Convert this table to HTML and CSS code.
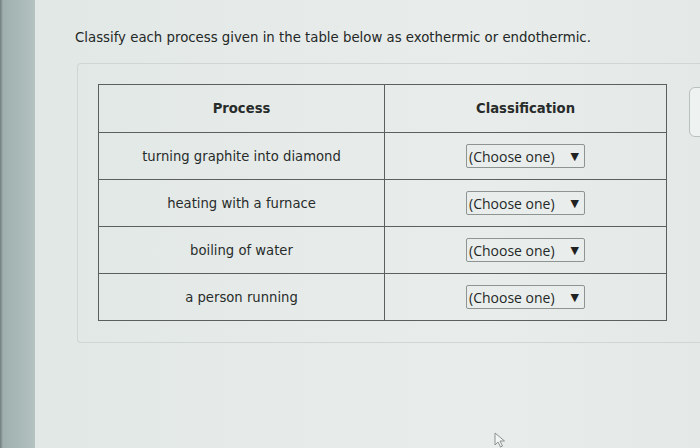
FILE: index.html
```html
<!DOCTYPE html>
<html>
<head>
<meta charset="utf-8">
<link rel="stylesheet" href="styles.css">
</head>
<body>
<div class="screen">
  <div class="strip"></div>
  <div class="main">
    <p class="prompt">Classify each process given in the table below as exothermic or endothermic.</p>
    <div class="panel">
      <table class="grid">
        <tr class="head">
          <th class="c1">Process</th>
          <th class="c2">Classification</th>
        </tr>
        <tr>
          <td>turning graphite into diamond</td>
          <td><span class="sel">(Choose one)<span class="arr">▼</span></span></td>
        </tr>
        <tr>
          <td>heating with a furnace</td>
          <td><span class="sel">(Choose one)<span class="arr">▼</span></span></td>
        </tr>
        <tr>
          <td>boiling of water</td>
          <td><span class="sel">(Choose one)<span class="arr">▼</span></span></td>
        </tr>
        <tr>
          <td>a person running</td>
          <td><span class="sel">(Choose one)<span class="arr">▼</span></span></td>
        </tr>
      </table>
      <div class="sidebtn"></div>
    </div>
  </div>
  <svg class="cursor" width="14" height="16" viewBox="0 0 14 16"><path d="M1 1 L1 13 L4 10 L6.5 15 L8.5 14 L6 9 L10.5 9 Z" fill="#f4f6f5" stroke="#8a9290" stroke-width="1"/></svg>
</div>
</body>
</html>
```
FILE: styles.css
```css
html, body {
  margin: 0;
  padding: 0;
}
body {
  width: 700px;
  height: 448px;
  overflow: hidden;
  background: #e3e9e7;
  font-family: "DejaVu Sans", Verdana, sans-serif;
  color: #2b2f2e;
}
.screen {
  position: relative;
  display: flex;
  width: 700px;
  height: 448px;
  background: linear-gradient(90deg, #e0e7e5 0%, #e6ebe9 40%, #e8ecea 70%, #e4e9e7 100%);
}
.strip {
  width: 35px;
  flex: none;
  background: linear-gradient(90deg, #6f7c7b 0px, #9fb0ae 3px, #a9b9b7 20px, #b4c2c0 35px);
}
.main {
  flex: 1;
  padding-left: 40px;
}
.prompt {
  margin: 28px 0 0 0;
  font-size: 13.3px;
  line-height: 20px;
  color: #242827;
}
.panel {
  position: relative;
  margin-top: 15px;
  margin-left: 2px;
  border: 1px solid #cfd6d4;
  border-right: none;
  border-radius: 4px 0 0 4px;
  height: 280px;
  padding: 20px 0 0 20px;
  box-sizing: border-box;
}
.grid {
  border-collapse: collapse;
  width: 569px;
  font-size: 13.2px;
  color: #282c2b;
}
.grid th, .grid td {
  border: 1px solid #5b605f;
  text-align: center;
  padding: 0;
  height: 46px;
}
.grid th {
  font-weight: bold;
  height: 47px;
  font-size: 13.2px;
}
.grid .c1 {
  width: 285px;
}
.sel {
  display: inline-flex;
  align-items: center;
  justify-content: space-between;
  width: 119px;
  height: 24px;
  box-sizing: border-box;
  border: 1px solid #8d9492;
  border-radius: 2px;
  padding: 0 5px 0 2px;
  font-family: "Open Sans", "Noto Sans", sans-serif;
  font-size: 14px;
  color: #242827;
  background: #e9eeec;
}
.arr {
  font-family: "DejaVu Sans", sans-serif;
  font-size: 11px;
  color: #1f2221;
}
.sidebtn {
  position: absolute;
  left: 611px;
  top: 23px;
  width: 30px;
  height: 50px;
  border: 1px solid #b9c1bf;
  border-radius: 6px;
  background: #eef2f0;
  box-sizing: border-box;
}
.cursor {
  position: absolute;
  left: 494px;
  top: 432px;
}
```
